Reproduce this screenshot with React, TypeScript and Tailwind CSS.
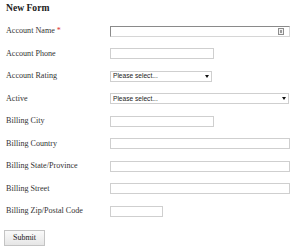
import React from "react";

const serif = { fontFamily: '"Liberation Serif", "Times New Roman", serif' };

function TextBox({ width, icon }: { width: string; icon?: boolean }) {
  return (
    <div className={`relative h-[11px] ${width}`}>
      <input
        type="text"
        className={`block h-full w-full border bg-white outline-none ${
          icon
            ? "border-t-[#8a8a8a] border-l-[#8a8a8a] border-r-[#d6d6d6] border-b-[#d6d6d6]"
            : "border-[#cfcfcf]"
        }`}
      />
      {icon && (
        <svg
          className="absolute right-[6px] top-[2px]"
          width="6"
          height="7"
          viewBox="0 0 6 7"
        >
          <rect x="0.5" y="0.5" width="5" height="6" fill="#f2f2f2" stroke="#8d8d8d" />
          <rect x="2.5" y="2" width="1" height="3" fill="#444" />
        </svg>
      )}
    </div>
  );
}

function Select({ width }: { width: string }) {
  return (
    <div className={`relative h-[11px] ${width}`}>
      <select
        className="block h-full w-full appearance-none border border-[#cfcfcf] bg-white py-0 pl-[2px] text-[6.6px] leading-none text-[#222] outline-none"
        style={{ fontFamily: '"Liberation Sans", Arial, sans-serif' }}
        defaultValue=""
      >
        <option value="">Please select...</option>
      </select>
      <span className="pointer-events-none absolute right-[3px] top-[4px] h-0 w-0 border-x-[2px] border-t-[3px] border-x-transparent border-t-[#111]" />
    </div>
  );
}

const rows: { label: string; required?: boolean; field: React.ReactNode }[] = [
  { label: "Account Name", required: true, field: <TextBox width="w-[180px]" icon /> },
  { label: "Account Phone", field: <TextBox width="w-[104px]" /> },
  { label: "Account Rating", field: <Select width="w-[102px]" /> },
  { label: "Active", field: <Select width="w-[179px]" /> },
  { label: "Billing City", field: <TextBox width="w-[104px]" /> },
  { label: "Billing Country", field: <TextBox width="w-[180px]" /> },
  { label: "Billing State/Province", field: <TextBox width="w-[180px]" /> },
  { label: "Billing Street", field: <TextBox width="w-[180px]" /> },
  { label: "Billing Zip/Postal Code", field: <TextBox width="w-[53px]" /> },
];

export default function App() {
  return (
    <div className="h-[252px] w-[300px] overflow-hidden bg-white text-[#333]" style={serif}>
      <h2 className="pl-[6px] pt-[2px] text-[9.6px] font-bold leading-[11px] text-[#222]">New Form</h2>
      <form className="mt-[13px] flex flex-col gap-[11.44px]">
        {rows.map((r) => (
          <div key={r.label} className="flex h-[11px] items-center">
            <label className="w-[110px] shrink-0 pl-[6px] text-[8.1px] leading-none text-[#333]">
              {r.label}
              {r.required && <span className="text-[#d33]"> *</span>}
            </label>
            {r.field}
          </div>
        ))}
        <div className="mt-[2px] pl-[4px]">
          <button
            type="button"
            className="block h-[16px] w-[41px] border border-[#c4c4c4] bg-gradient-to-b from-[#fafafa] to-[#e6e6e6] text-[8px] leading-none text-[#222]"
            style={serif}
          >
            Submit
          </button>
        </div>
      </form>
    </div>
  );
}
